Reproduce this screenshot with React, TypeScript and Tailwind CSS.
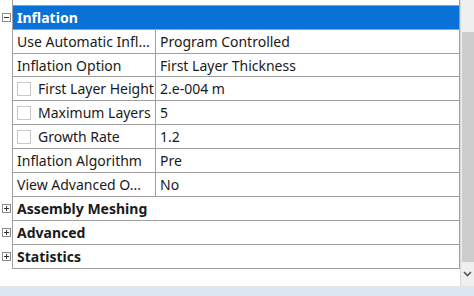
import React from 'react';

type Row =
  | { kind: 'prop'; label: string; value: string; check?: boolean; short?: boolean }
  | { kind: 'group'; label: string };

const ROWS: Row[] = [
  { kind: 'prop', label: 'Use Automatic Infl...', value: 'Program Controlled' },
  { kind: 'prop', label: 'Inflation Option', value: 'First Layer Thickness', short: true },
  { kind: 'prop', label: 'First Layer Height', value: '2.e-004 m', check: true },
  { kind: 'prop', label: 'Maximum Layers', value: '5', check: true },
  { kind: 'prop', label: 'Growth Rate', value: '1.2', check: true },
  { kind: 'prop', label: 'Inflation Algorithm', value: 'Pre' },
  { kind: 'prop', label: 'View Advanced O...', value: 'No' },
  { kind: 'group', label: 'Assembly Meshing' },
  { kind: 'group', label: 'Advanced' },
  { kind: 'group', label: 'Statistics' },
];

function ToggleBox({ plus }: { plus: boolean }) {
  return (
    <div className="relative h-[9px] w-[9px] border border-[#8a8a8a] bg-white">
      <div className="absolute left-[1px] top-[3px] h-px w-[5px] bg-[#333]" />
      {plus && <div className="absolute left-[3px] top-[1px] h-[5px] w-px bg-[#333]" />}
    </div>
  );
}

export default function App() {
  return (
    <div
      className="flex h-[296px] w-[474px] flex-col overflow-hidden bg-white text-[14px] text-[#1a1a1a]"
      style={{ fontFamily: '"Noto Sans", "Open Sans", sans-serif' }}
    >
      <div className="flex flex-1 overflow-hidden">
        {/* tree gutter + grid */}
        <div className="flex w-[460px] flex-col">
          {/* clipped row above */}
          <div className="flex h-[24px] -mt-[18px] shrink-0">
            <div className="w-[12px]" />
            <div className="flex-1 border-x border-b border-[#a0a0a0]" />
          </div>

          {/* Inflation header */}
          <div className="flex h-[23px] shrink-0 items-center">
            <div className="flex w-[12px] justify-center pl-[1px]">
              <ToggleBox plus={false} />
            </div>
            <div className="flex h-full flex-1 items-center border-x border-[#a0a0a0] bg-[#0a72d6] pl-[4px] font-bold text-white">
              Inflation
            </div>
          </div>

          {ROWS.map((row) =>
            row.kind === 'group' ? (
              <div key={row.label} className="flex h-[24px] shrink-0 items-center">
                <div className="flex w-[12px] justify-center pl-[1px]">
                  <ToggleBox plus />
                </div>
                <div className="flex h-full flex-1 items-center border-x border-t border-[#a0a0a0] pl-[4px] font-bold">
                  {row.label}
                </div>
              </div>
            ) : (
              <div key={row.label} className={`flex shrink-0 ${row.short ? 'h-[23px]' : 'h-[24px]'}`}>
                <div className="w-[12px]" />
                <div className="flex h-full flex-1 border-x border-t border-[#a0a0a0]">
                  <div className="flex w-[143px] items-center gap-[7px] overflow-hidden whitespace-nowrap border-r border-[#a0a0a0] pl-[4px]">
                    {row.check && <div className="h-[14px] w-[14px] shrink-0 border border-[#c8c8c8] bg-white" />}
                    <span>{row.label}</span>
                  </div>
                  <div className="flex flex-1 items-center whitespace-nowrap pl-[4px]">{row.value}</div>
                </div>
              </div>
            )
          )}
          <div className="ml-[12px] border-t border-[#a0a0a0]" />
        </div>

        {/* scrollbar */}
        <div className="flex w-[14px] flex-col border-l border-[#d8d8d8] bg-[#f0f0f0]">
          <div className="h-[32px]" />
          <div className="mx-auto h-[230px] w-[12px] bg-[#cdcdcd]" />
          <div className="flex flex-1 items-center justify-center">
            <svg width="9" height="6" viewBox="0 0 9 6">
              <path d="M1 1 L4.5 4.5 L8 1" fill="none" stroke="#555" strokeWidth="1.6" />
            </svg>
          </div>
        </div>
      </div>
      <div className="h-px bg-[#e4e4e4]" />
      <div className="h-[9px] bg-[#dde7f2]" />
    </div>
  );
}
